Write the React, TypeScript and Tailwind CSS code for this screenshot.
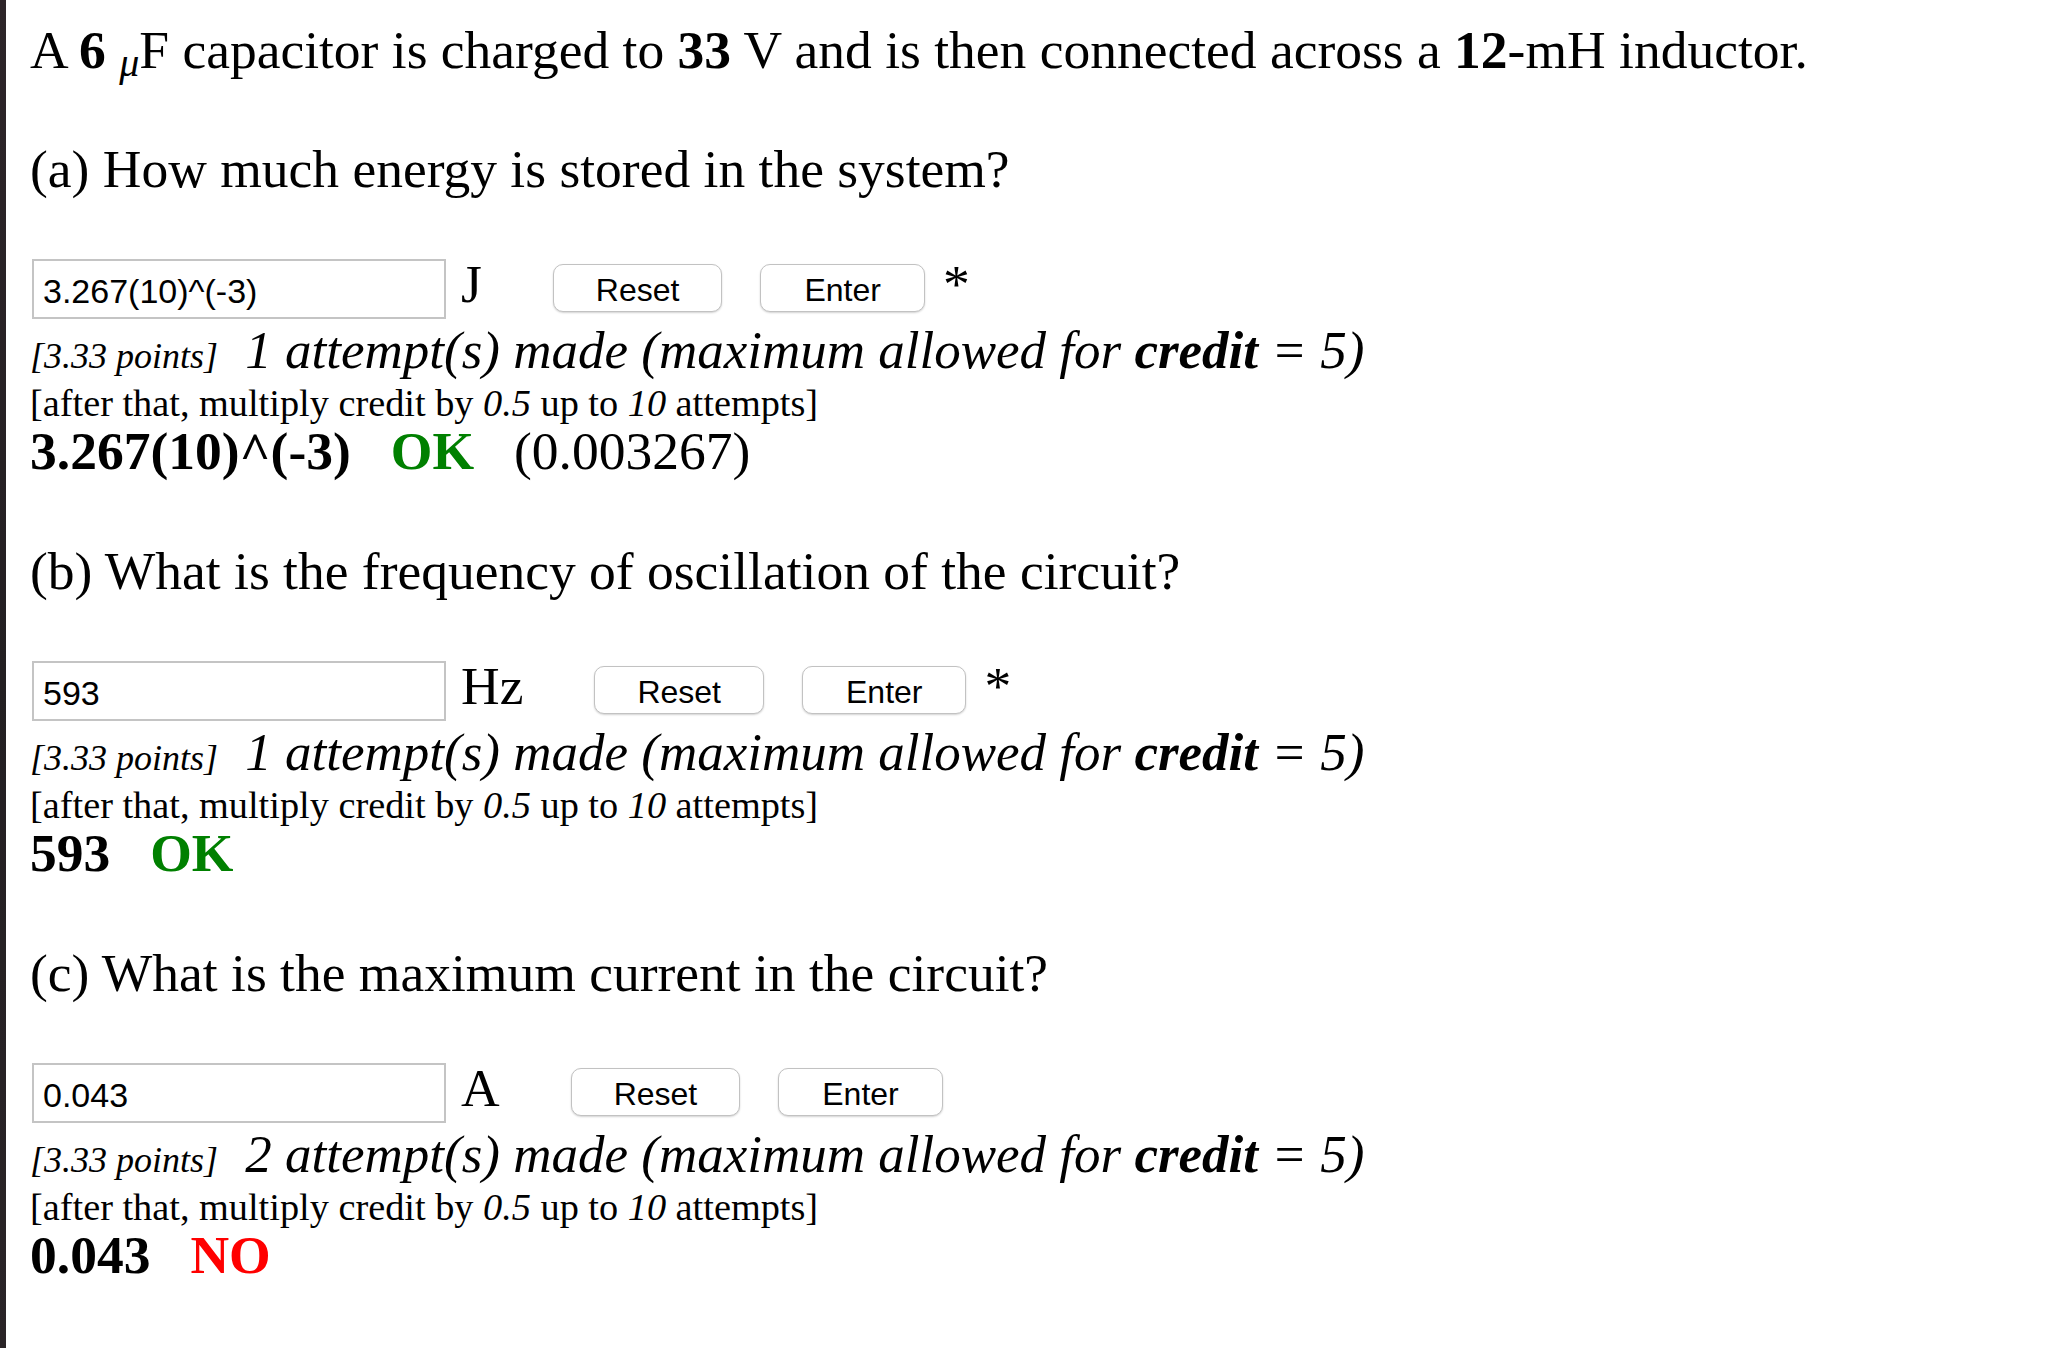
import React from "react";

type Part = {
  question: string;
  value: string;
  unit: string;
  star: boolean;
  attempts: number;
  answer: string;
  ok: boolean;
  decimal?: string;
};

const parts: Part[] = [
  {
    question: "(a) How much energy is stored in the system?",
    value: "3.267(10)^(-3)",
    unit: "J",
    star: true,
    attempts: 1,
    answer: "3.267(10)^(-3)",
    ok: true,
    decimal: "(0.003267)",
  },
  {
    question: "(b) What is the frequency of oscillation of the circuit?",
    value: "593",
    unit: "Hz",
    star: true,
    attempts: 1,
    answer: "593",
    ok: true,
  },
  {
    question: "(c) What is the maximum current in the circuit?",
    value: "0.043",
    unit: "A",
    star: false,
    attempts: 2,
    answer: "0.043",
    ok: false,
  },
];

function QuestionPart({ part, first }: { part: Part; first: boolean }) {
  return (
    <section className={first ? "mt-[59px]" : "mt-[65px]"}>
      {/* question */}
      <div className="h-[60px] whitespace-nowrap text-[53.5px] leading-[60px]">{part.question}</div>

      {/* answer box + buttons */}
      <div className="mt-[55px] flex h-[65px] items-start">
        <input
          defaultValue={part.value}
          className="ml-[2px] mt-[5px] h-[60px] w-[414px] border-2 border-[#c4c4c4] bg-white pl-[9px] pt-[4px] font-['Liberation_Sans',Arial,sans-serif] text-[34px] text-black outline-none"
        />
        <span className="ml-[15px] text-[53.5px] leading-[60px]">{part.unit}</span>
        <button className="ml-[71px] mt-[10px] h-[48px] rounded-[10px] border border-[#c2c2c2] bg-white px-[42px] pt-[4px] font-['Liberation_Sans',Arial,sans-serif] text-[32px] leading-none text-black shadow-[0_1px_2px_rgba(0,0,0,0.18)]">
          Reset
        </button>
        <button className="ml-[38px] mt-[10px] h-[48px] rounded-[10px] border border-[#c2c2c2] bg-white px-[43px] pt-[4px] font-['Liberation_Sans',Arial,sans-serif] text-[32px] leading-none text-black shadow-[0_1px_2px_rgba(0,0,0,0.18)]">
          Enter
        </button>
        {part.star ? <span className="ml-[18px] text-[53.5px] leading-[60px]">*</span> : null}
      </div>

      {/* attempts */}
      <div className="mt-[6px] h-[50px] whitespace-nowrap text-[53px] leading-[50px] italic">
        <span className="text-[36px] leading-none">[3.33 points]</span>
        <span className="ml-[14px]">
          {" "}
          {part.attempts} attempt(s) made (maximum allowed for <b>credit</b> = 5)
        </span>
      </div>
      <div className="mt-[6px] h-[44px] whitespace-nowrap text-[38.3px] leading-[44px]">
        [after that, multiply credit by <i>0.5</i> up to <i>10</i> attempts]
      </div>

      {/* result */}
      <div className="mt-[1px] h-[50px] whitespace-nowrap text-[53.5px] leading-[50px]">
        <b>{part.answer}</b>
        {part.ok ? (
          <b className="ml-[40px] text-[#008000]">OK</b>
        ) : (
          <b className="ml-[40px] text-[#ff0000]">NO</b>
        )}
        {part.decimal ? <span className="ml-[40px]">{part.decimal}</span> : null}
      </div>
    </section>
  );
}

export default function App() {
  return (
    <div className="flex h-[1348px] w-full bg-white font-['Liberation_Serif','Times_New_Roman',serif] text-black">
      {/* dark desktop edge */}
      <div className="w-[6px] shrink-0 bg-gradient-to-b from-[#2d2529] via-[#231f22] to-[#2a2427]" />

      <main className="flex-1 pl-[24px]">
        <div className="mt-[20px] h-[60px] whitespace-nowrap text-[53.5px] leading-[60px]">
          A <b>6</b> <span className="align-[-8px] text-[40px] leading-none italic">μ</span>F capacitor is charged
          to <b>33</b> V and is then connected across a <b>12</b>-mH inductor.
        </div>

        {parts.map((p, i) => (
          <QuestionPart key={i} part={p} first={i === 0} />
        ))}
      </main>
    </div>
  );
}
